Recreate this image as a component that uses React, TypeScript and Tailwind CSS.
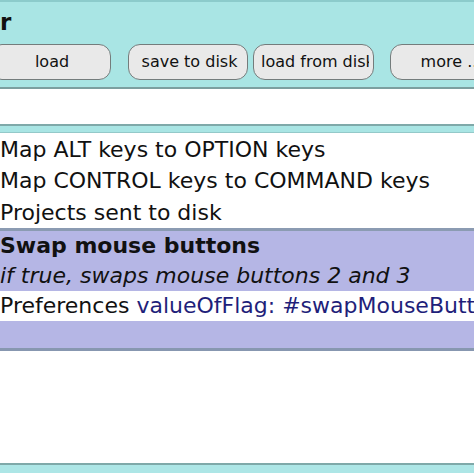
export default function App() {
  const prefs = [
    "Map ALT keys to OPTION keys",
    "Map CONTROL keys to COMMAND keys",
    "Projects sent to disk",
  ];

  return (
    <div className="h-[474px] w-[474px] overflow-hidden bg-white font-['DejaVu_Sans',sans-serif] text-[#111]">
      {/* header panel */}
      <div className="border-y-2 border-t-[#8ccbcb] border-b-[#7c9fa0] bg-[#a9e5e4] pt-[5px] pb-[7px]">
        <div className="text-[23px] font-bold leading-[30px]">r</div>
        <div className="ml-[-10px] mt-[7px] flex text-[16px]">
          <Btn label="load" className="w-[121px]" />
          <Btn label="save to disk" className="ml-[17px] w-[120px]" />
          <Btn label="load from disk" className="ml-[5px] w-[121px]" />
          <Btn label="more ..." className="ml-[16px] w-[120px]" />
        </div>
      </div>

      <div className="h-[35px]" />

      <div className="h-[9px] border-t-2 border-b border-t-[#7fa9a9] border-b-[#94c9c9] bg-[#a9e5e4]" />

      {/* preference list */}
      <div className="pt-[0.5px] text-[22px] leading-[31.5px]">
        {prefs.map((p) => (
          <div key={p} className="whitespace-nowrap">
            {p}
          </div>
        ))}
      </div>

      {/* selected preference */}
      <div className="border-y-[3px] border-t-[#8b9bb2] border-b-[#8797b0] bg-[#b5b6e5] pb-[27px] text-[22px] leading-[30px]">
        <div className="whitespace-nowrap font-bold">Swap mouse buttons</div>
        <div className="whitespace-nowrap italic">if true, swaps mouse buttons 2 and 3</div>
        <div className="whitespace-nowrap bg-white">
          Preferences <span className="text-[#1f1f7a]">valueOfFlag: #swapMouseButtons</span>
        </div>
      </div>

      <div className="h-[112px]" />

      <div className="h-[10px] border-t-2 border-t-[#7fa9a9] bg-[#ade6e6]" />
    </div>
  );
}

function Btn({ label, className }: { label: string; className: string }) {
  return (
    <div
      className={`flex h-[36px] shrink-0 items-center rounded-[12px] border-[1.5px] border-[#747c7c] bg-[#e9e9e9] pl-[7px] pr-[4px] ${className}`}
    >
      <div className="w-full overflow-hidden whitespace-nowrap text-center leading-[20px]">{label}</div>
    </div>
  );
}
